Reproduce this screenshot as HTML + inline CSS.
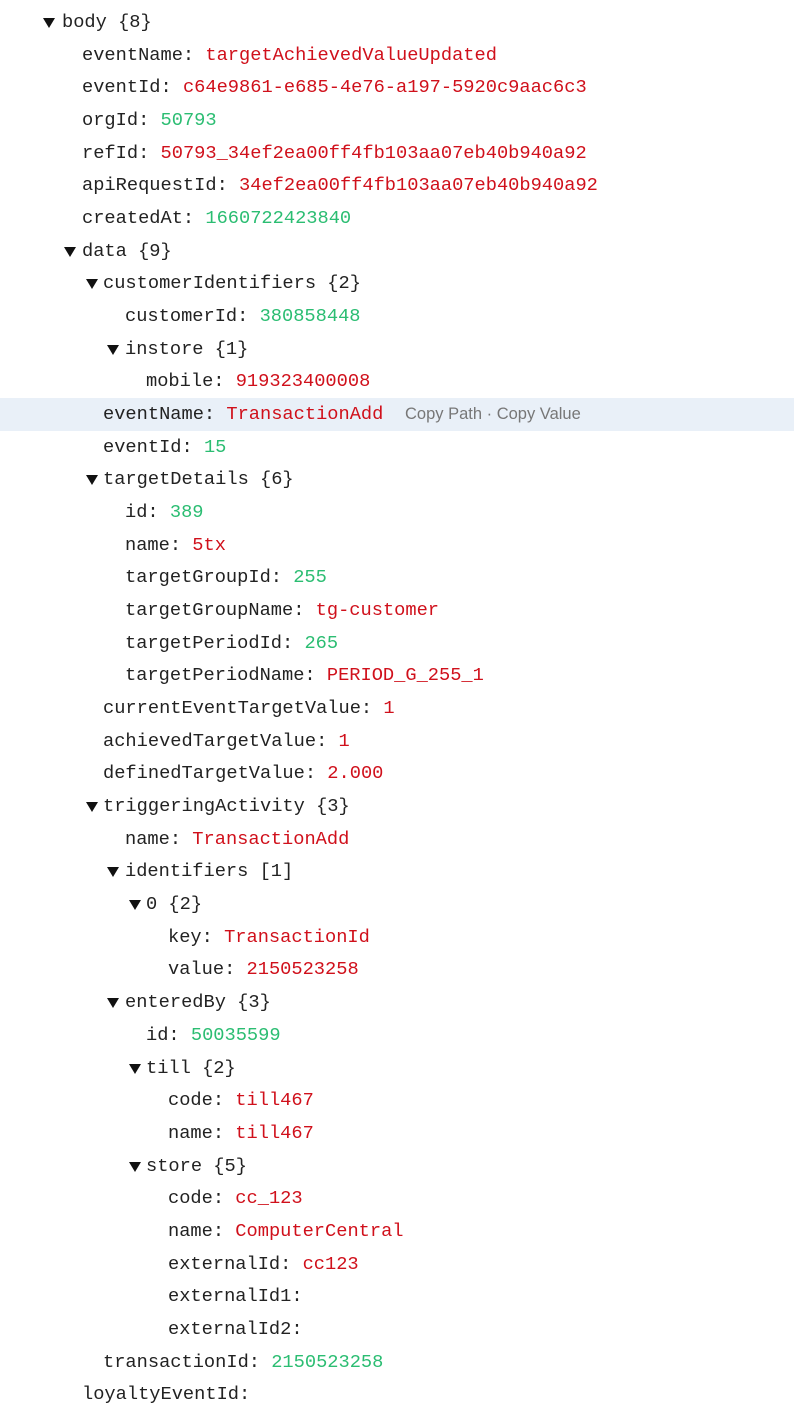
<!DOCTYPE html>
<html><head><meta charset="utf-8"><style>
body{margin:0;background:#fff;width:794px;height:1418px;overflow:hidden}
.w{padding-top:6px;font-family:"Liberation Mono",monospace;font-size:18.7px;color:#222}
.r{position:relative;height:32.68px;line-height:32.68px;white-space:pre}
.r span.t{position:absolute;top:0}
.k{color:#222}.s{color:#d0101b}.n{color:#2bbd72}
.tri{position:absolute;top:12px;width:0;height:0;border-left:6.5px solid transparent;border-right:6.5px solid transparent;border-top:10px solid #111}
.hl{background:#e9f0f8}
.cp{position:absolute;left:405px;top:0;font-family:"Liberation Sans",sans-serif;font-size:16.5px;color:#777}
</style></head><body><div class="w">
<div class="r"><i class="tri" style="left:43px"></i><span class="t" style="left:62px">body {8}</span></div>
<div class="r"><span class="t" style="left:82px">eventName: <span class="s">targetAchievedValueUpdated</span></span></div>
<div class="r"><span class="t" style="left:82px">eventId: <span class="s">c64e9861-e685-4e76-a197-5920c9aac6c3</span></span></div>
<div class="r"><span class="t" style="left:82px">orgId: <span class="n">50793</span></span></div>
<div class="r"><span class="t" style="left:82px">refId: <span class="s">50793_34ef2ea00ff4fb103aa07eb40b940a92</span></span></div>
<div class="r"><span class="t" style="left:82px">apiRequestId: <span class="s">34ef2ea00ff4fb103aa07eb40b940a92</span></span></div>
<div class="r"><span class="t" style="left:82px">createdAt: <span class="n">1660722423840</span></span></div>
<div class="r"><i class="tri" style="left:64px"></i><span class="t" style="left:82px">data {9}</span></div>
<div class="r"><i class="tri" style="left:86px"></i><span class="t" style="left:103px">customerIdentifiers {2}</span></div>
<div class="r"><span class="t" style="left:125px">customerId: <span class="n">380858448</span></span></div>
<div class="r"><i class="tri" style="left:107px"></i><span class="t" style="left:125px">instore {1}</span></div>
<div class="r"><span class="t" style="left:146px">mobile: <span class="s">919323400008</span></span></div>
<div class="r hl"><span class="t" style="left:103px">eventName: <span class="s">TransactionAdd</span></span><span class="cp">Copy Path · Copy Value</span></div>
<div class="r"><span class="t" style="left:103px">eventId: <span class="n">15</span></span></div>
<div class="r"><i class="tri" style="left:86px"></i><span class="t" style="left:103px">targetDetails {6}</span></div>
<div class="r"><span class="t" style="left:125px">id: <span class="n">389</span></span></div>
<div class="r"><span class="t" style="left:125px">name: <span class="s">5tx</span></span></div>
<div class="r"><span class="t" style="left:125px">targetGroupId: <span class="n">255</span></span></div>
<div class="r"><span class="t" style="left:125px">targetGroupName: <span class="s">tg-customer</span></span></div>
<div class="r"><span class="t" style="left:125px">targetPeriodId: <span class="n">265</span></span></div>
<div class="r"><span class="t" style="left:125px">targetPeriodName: <span class="s">PERIOD_G_255_1</span></span></div>
<div class="r"><span class="t" style="left:103px">currentEventTargetValue: <span class="s">1</span></span></div>
<div class="r"><span class="t" style="left:103px">achievedTargetValue: <span class="s">1</span></span></div>
<div class="r"><span class="t" style="left:103px">definedTargetValue: <span class="s">2.000</span></span></div>
<div class="r"><i class="tri" style="left:86px"></i><span class="t" style="left:103px">triggeringActivity {3}</span></div>
<div class="r"><span class="t" style="left:125px">name: <span class="s">TransactionAdd</span></span></div>
<div class="r"><i class="tri" style="left:107px"></i><span class="t" style="left:125px">identifiers [1]</span></div>
<div class="r"><i class="tri" style="left:129px"></i><span class="t" style="left:146px">0 {2}</span></div>
<div class="r"><span class="t" style="left:168px">key: <span class="s">TransactionId</span></span></div>
<div class="r"><span class="t" style="left:168px">value: <span class="s">2150523258</span></span></div>
<div class="r"><i class="tri" style="left:107px"></i><span class="t" style="left:125px">enteredBy {3}</span></div>
<div class="r"><span class="t" style="left:146px">id: <span class="n">50035599</span></span></div>
<div class="r"><i class="tri" style="left:129px"></i><span class="t" style="left:146px">till {2}</span></div>
<div class="r"><span class="t" style="left:168px">code: <span class="s">till467</span></span></div>
<div class="r"><span class="t" style="left:168px">name: <span class="s">till467</span></span></div>
<div class="r"><i class="tri" style="left:129px"></i><span class="t" style="left:146px">store {5}</span></div>
<div class="r"><span class="t" style="left:168px">code: <span class="s">cc_123</span></span></div>
<div class="r"><span class="t" style="left:168px">name: <span class="s">ComputerCentral</span></span></div>
<div class="r"><span class="t" style="left:168px">externalId: <span class="s">cc123</span></span></div>
<div class="r"><span class="t" style="left:168px">externalId1:</span></div>
<div class="r"><span class="t" style="left:168px">externalId2:</span></div>
<div class="r"><span class="t" style="left:103px">transactionId: <span class="n">2150523258</span></span></div>
<div class="r"><span class="t" style="left:82px">loyaltyEventId:</span></div>
</div></body></html>
